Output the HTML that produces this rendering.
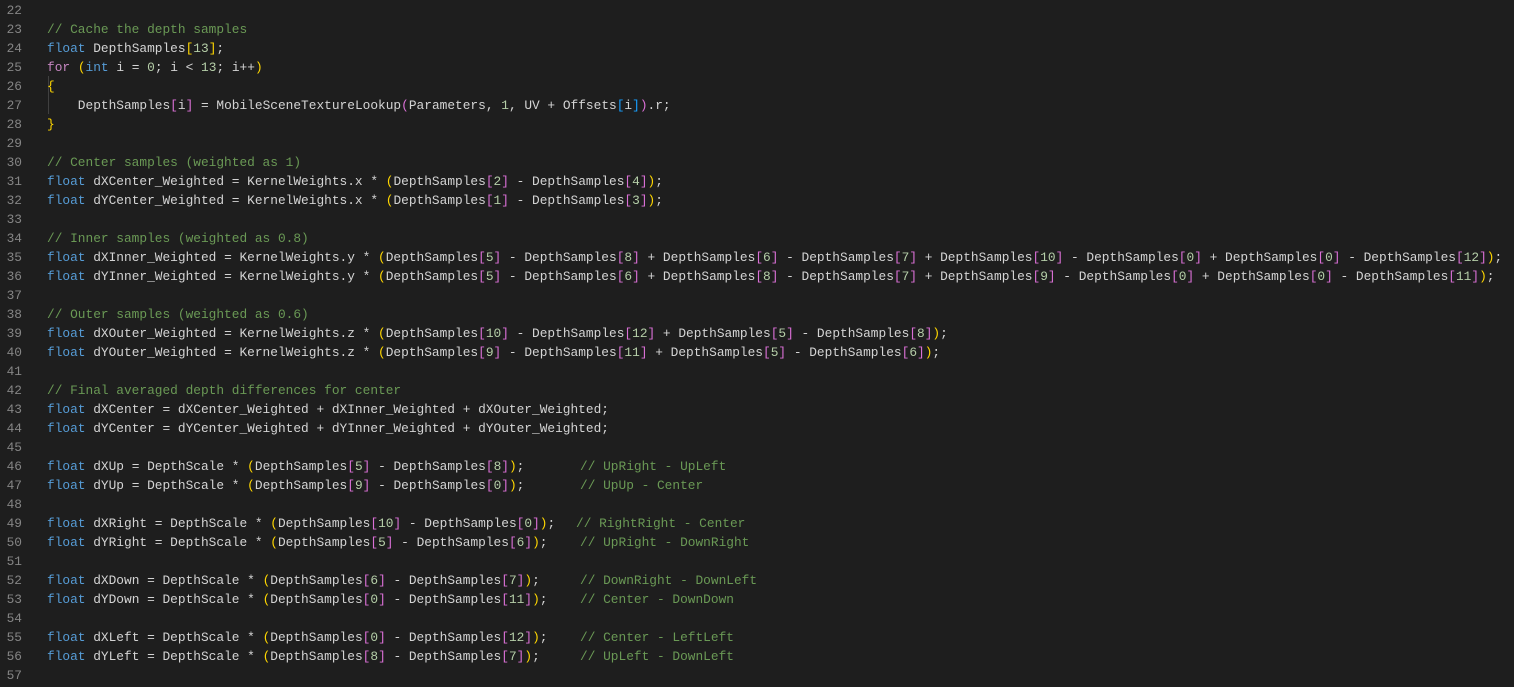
<!DOCTYPE html>
<html><head><meta charset="utf-8"><style>
body{margin:0;background:#1e1e1e;width:1514px;height:687px;overflow:hidden;font-family:"Liberation Mono",monospace;font-size:12.83px;color:#d4d4d4}
.l{position:absolute;height:19px;line-height:19px;white-space:pre;left:0}
.ln{position:absolute;width:22px;text-align:right;color:#858585;left:0}
.t{position:absolute;left:47px}
.k{color:#569cd6}.f{color:#c586c0}.c{color:#6a9955}.n{color:#b5cea8}
.a{color:#ffd700}.b{color:#da70d6}.d{color:#179fff}
.cm{position:absolute;color:#6a9955}
.guide{position:absolute;left:48px;top:76px;width:1px;height:38px;background:#404040}
</style></head><body>
<div class="guide"></div>
<div id="c"></div>
<script>
const L={
22:'',
23:'<span class="c">// Cache the depth samples</span>',
24:'<span class="k">float</span> DepthSamples<span class="a">[</span><span class="n">13</span><span class="a">]</span>;',
25:'<span class="f">for</span> <span class="a">(</span><span class="k">int</span> i = <span class="n">0</span>; i &lt; <span class="n">13</span>; i++<span class="a">)</span>',
26:'<span class="a">{</span>',
27:'    DepthSamples<span class="b">[</span>i<span class="b">]</span> = MobileSceneTextureLookup<span class="b">(</span>Parameters, <span class="n">1</span>, UV + Offsets<span class="d">[</span>i<span class="d">]</span><span class="b">)</span>.r;',
28:'<span class="a">}</span>',
29:'',
30:'<span class="c">// Center samples (weighted as 1)</span>',
31:'F dXCenter_Weighted = KernelWeights.x * (D2 - D4);',
32:'F dYCenter_Weighted = KernelWeights.x * (D1 - D3);',
33:'',
34:'<span class="c">// Inner samples (weighted as 0.8)</span>',
35:'F dXInner_Weighted = KernelWeights.y * (D5 - D8 + D6 - D7 + D10 - D0 + D0 - D12);',
36:'F dYInner_Weighted = KernelWeights.y * (D5 - D6 + D8 - D7 + D9 - D0 + D0 - D11);',
37:'',
38:'<span class="c">// Outer samples (weighted as 0.6)</span>',
39:'F dXOuter_Weighted = KernelWeights.z * (D10 - D12 + D5 - D8);',
40:'F dYOuter_Weighted = KernelWeights.z * (D9 - D11 + D5 - D6);',
41:'',
42:'<span class="c">// Final averaged depth differences for center</span>',
43:'F dXCenter = dXCenter_Weighted + dXInner_Weighted + dXOuter_Weighted;',
44:'F dYCenter = dYCenter_Weighted + dYInner_Weighted + dYOuter_Weighted;',
45:'',
46:'F dXUp = DepthScale * (D5 - D8);|580|// UpRight - UpLeft',
47:'F dYUp = DepthScale * (D9 - D0);|580|// UpUp - Center',
48:'',
49:'F dXRight = DepthScale * (D10 - D0);|576|// RightRight - Center',
50:'F dYRight = DepthScale * (D5 - D6);|580|// UpRight - DownRight',
51:'',
52:'F dXDown = DepthScale * (D6 - D7);|580|// DownRight - DownLeft',
53:'F dYDown = DepthScale * (D0 - D11);|580|// Center - DownDown',
54:'',
55:'F dXLeft = DepthScale * (D0 - D12);|580|// Center - LeftLeft',
56:'F dYLeft = DepthScale * (D8 - D7);|580|// UpLeft - DownLeft',
57:''};
let h='';
for(let i=22;i<=57;i++){
 let s=L[i],cm='';
 if(s.includes('|')){const p=s.split('|');s=p[0];cm='<span class="cm" style="left:'+(p[1]-47)+'px">'+p[2]+'</span>';}
 if(s.startsWith('F ')){
  s='<span class="k">float</span> '+s.slice(2);
  s=s.replace(/\(/g,'<span class="a">(</span>').replace(/\);/g,'<span class="a">)</span>;');
  s=s.replace(/D(\d+)/g,'DepthSamples<span class="b">[</span><span class="n">$1</span><span class="b">]</span>');
 }
 h+='<div class="l" style="top:'+(0.5+(i-22)*19)+'px"><span class="ln">'+i+'</span><span class="t">'+s+cm+'</span></div>';
}
document.getElementById('c').innerHTML=h;
</script>
</body></html>
